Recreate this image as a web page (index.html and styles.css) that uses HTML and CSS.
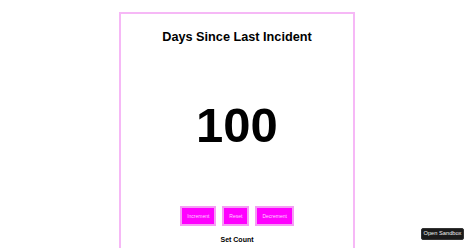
FILE: index.html
```html
<!DOCTYPE html>
<html>
<head>
<meta charset="utf-8">
<link rel="stylesheet" href="styles.css">
</head>
<body>
<div class="card">
  <h1 class="title">Days Since Last Incident</h1>
  <div class="count">100</div>
  <div class="buttons">
    <button class="btn">Increment</button>
    <button class="btn">Reset</button>
    <button class="btn">Decrement</button>
  </div>
  <h2 class="sub">Set Count</h2>
</div>
<button class="sandbox">Open Sandbox</button>
</body>
</html>
```
FILE: styles.css
```css
html, body {
  margin: 0;
  padding: 0;
  background: #ffffff;
  overflow: hidden;
  height: 248px;
}
body {
  font-family: "Liberation Sans", Arial, sans-serif;
  color: #000;
}
.card {
  width: 232px;
  margin: 12px auto 0;
  border: 2px solid #f6b8f6;
  display: flex;
  flex-direction: column;
  align-items: center;
  height: 240px;
}
.title {
  margin: 16px 0 0;
  font-size: 12.7px;
  line-height: 15px;
  font-weight: bold;
}
.count {
  margin-top: 52px;
  font-size: 49px;
  line-height: 56px;
  font-weight: bold;
}
.buttons {
  margin-top: 53px;
  display: flex;
  gap: 6px;
}
.btn {
  box-sizing: border-box;
  height: 20px;
  padding: 0 5px;
  border: 2px solid #f59cf5;
  background: #ff00ff;
  color: #ffd6ff;
  font-family: "Liberation Sans", Arial, sans-serif;
  font-size: 5px;
  line-height: 1;
}
.sub {
  margin: 10px 0 0;
  font-size: 7px;
  line-height: 8px;
  font-weight: bold;
}
.sandbox {
  position: fixed;
  right: 10px;
  bottom: 8px;
  box-sizing: border-box;
  width: 43px;
  height: 12px;
  padding: 0;
  border: 1px solid #333;
  border-radius: 2px;
  background: #1a1a1a;
  color: #f0f0f0;
  font-family: "Liberation Sans", Arial, sans-serif;
  font-size: 5.7px;
  line-height: 1;
  white-space: nowrap;
}
```
